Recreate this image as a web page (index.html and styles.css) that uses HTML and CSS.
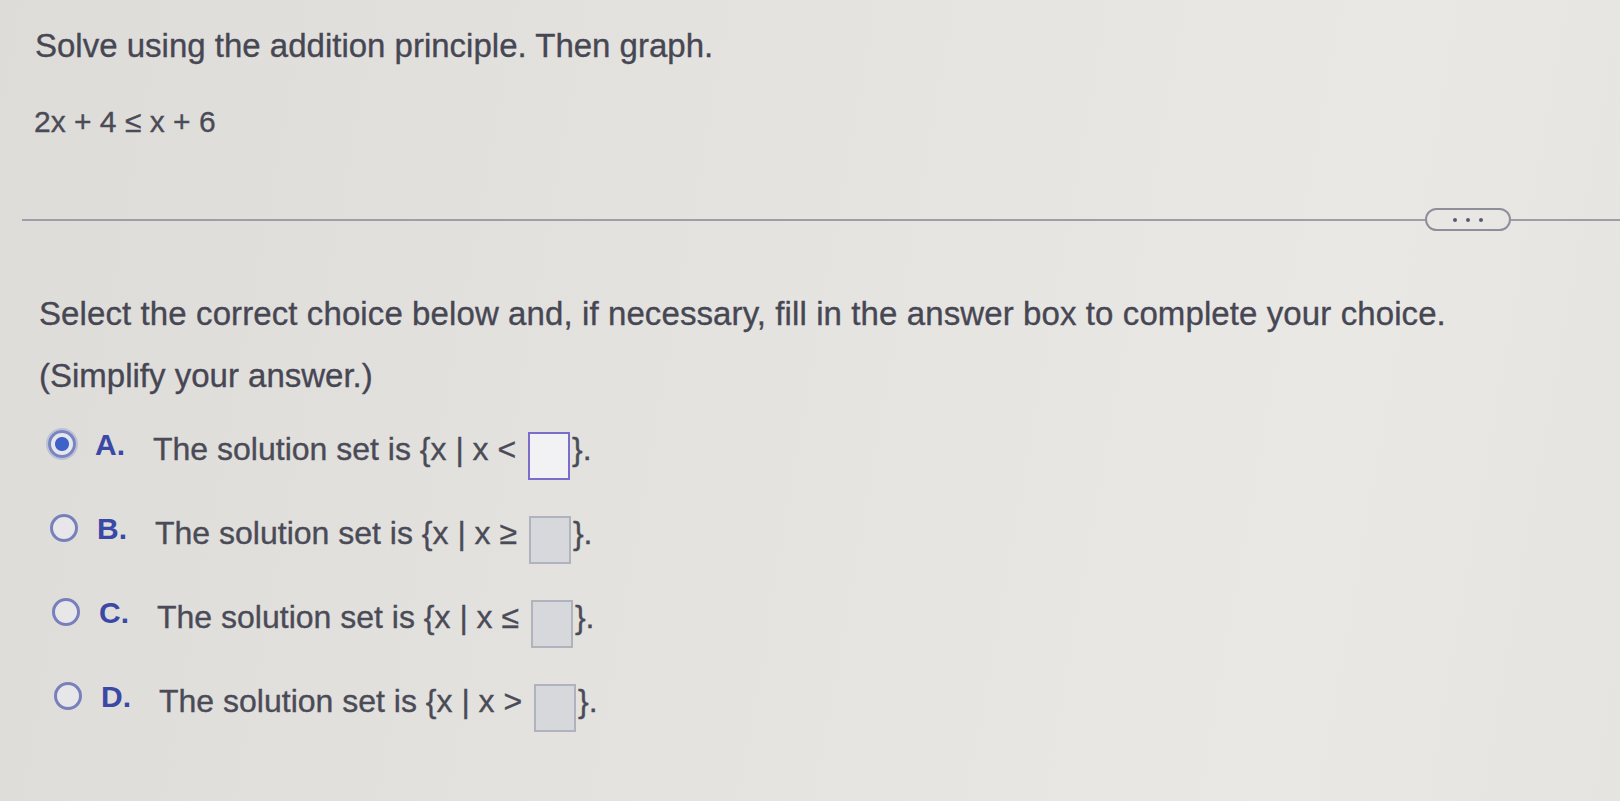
FILE: index.html
```html
<!DOCTYPE html>
<html lang="en">
<head>
<meta charset="utf-8">
<title>Solve using the addition principle</title>
<link rel="stylesheet" href="styles.css">
</head>
<body>
<main class="page">
  <h1 class="title">Solve using the addition principle. Then graph.</h1>
  <div class="equation">2x + 4 ≤ x + 6</div>

  <div class="divider">
    <span class="rule"></span>
    <span class="more" aria-label="more"><i></i><i></i><i></i></span>
    <span class="rule rule-end"></span>
  </div>

  <p class="instr">Select the correct choice below and, if necessary, fill in the answer box to complete your choice.</p>
  <p class="hint">(Simplify your answer.)</p>

  <div class="choices">
    <div class="choice"><span class="radio on"></span><span class="letter">A.</span><span class="text">The solution set is {x | x &lt; <span class="box active"></span>}.</span></div>
    <div class="choice"><span class="radio"></span><span class="letter">B.</span><span class="text">The solution set is {x | x ≥ <span class="box"></span>}.</span></div>
    <div class="choice"><span class="radio"></span><span class="letter">C.</span><span class="text">The solution set is {x | x ≤ <span class="box"></span>}.</span></div>
    <div class="choice"><span class="radio"></span><span class="letter">D.</span><span class="text">The solution set is {x | x &gt; <span class="box"></span>}.</span></div>
  </div>
</main>
</body>
</html>
```

FILE: styles.css
```css
html, body {
  margin: 0;
  height: 100%;
}

body {
  background: linear-gradient(100deg, #dddcd9 0%, #e4e3e0 45%, #e9e8e5 80%, #e5e4e1 100%);
  color: #474754;
  font-family: "Liberation Sans", Arial, Helvetica, sans-serif;
  overflow: hidden;
}

.page {
  padding-top: 26px;
  -webkit-text-stroke: 0.35px currentColor;
}

.title {
  margin: 0 0 0 35px;
  font-size: 33px;
  font-weight: normal;
  line-height: 40px;
  color: #474754;
}

.equation {
  margin: 36px 0 0 34px;
  font-size: 30px;
  line-height: 40px;
  color: #4b4b57;
}

.divider {
  display: flex;
  align-items: center;
  height: 23px;
  margin: 66px 0 0 22px;
}

.rule {
  flex: 1;
  height: 2px;
  background: #9d9ea7;
}

.rule-end {
  flex: 0 0 109px;
}

.more {
  box-sizing: border-box;
  width: 86px;
  height: 23px;
  border: 2px solid #8d8f9a;
  border-radius: 12px;
  display: flex;
  align-items: center;
  justify-content: center;
  gap: 9px;
  -webkit-text-stroke: 0;
}

.more i {
  width: 4px;
  height: 4px;
  border-radius: 50%;
  background: #585c70;
}

.instr {
  margin: 63px 0 0 39px;
  font-size: 33px;
  line-height: 40px;
  letter-spacing: 0.1px;
  color: #474754;
}

.hint {
  margin: 22px 0 0 39px;
  font-size: 33px;
  line-height: 40px;
  color: #474754;
}

.choices {
  margin-top: 31px;
  margin-left: 48px;
}

.choice {
  height: 84px;
  font-size: 32px;
  line-height: 36px;
  white-space: nowrap;
}

.choice:nth-child(2) { margin-left: 2px; }
.choice:nth-child(3) { margin-left: 4px; }
.choice:nth-child(4) { margin-left: 6px; }

.radio {
  display: inline-block;
  box-sizing: border-box;
  width: 28px;
  height: 28px;
  border: 3px solid #7880bb;
  border-radius: 50%;
  background: #e7e7ea;
  vertical-align: 2px;
  margin-right: 19px;
}

.radio.on {
  border: 3px solid #7a85c0;
  background: radial-gradient(circle, #3e62c8 0 6.5px, #e6e6ec 7.5px);
  box-shadow: 0 0 0 2px #bcc1da;
}

.letter {
  display: inline-block;
  width: 58px;
  font-size: 30px;
  font-weight: bold;
  color: #3a48a6;
  vertical-align: 5px;
  -webkit-text-stroke: 0;
}

.text {
  color: #4b4b57;
}

.box {
  display: inline-block;
  box-sizing: border-box;
  width: 42px;
  height: 48px;
  margin-left: 3px;
  margin-right: 2px;
  border: 2px solid #b0b2be;
  background: #d7d8db;
  vertical-align: -20px;
  -webkit-text-stroke: 0;
}

.box.active {
  border-color: #7b6dcb;
  background: #f2f2f4;
}
```
